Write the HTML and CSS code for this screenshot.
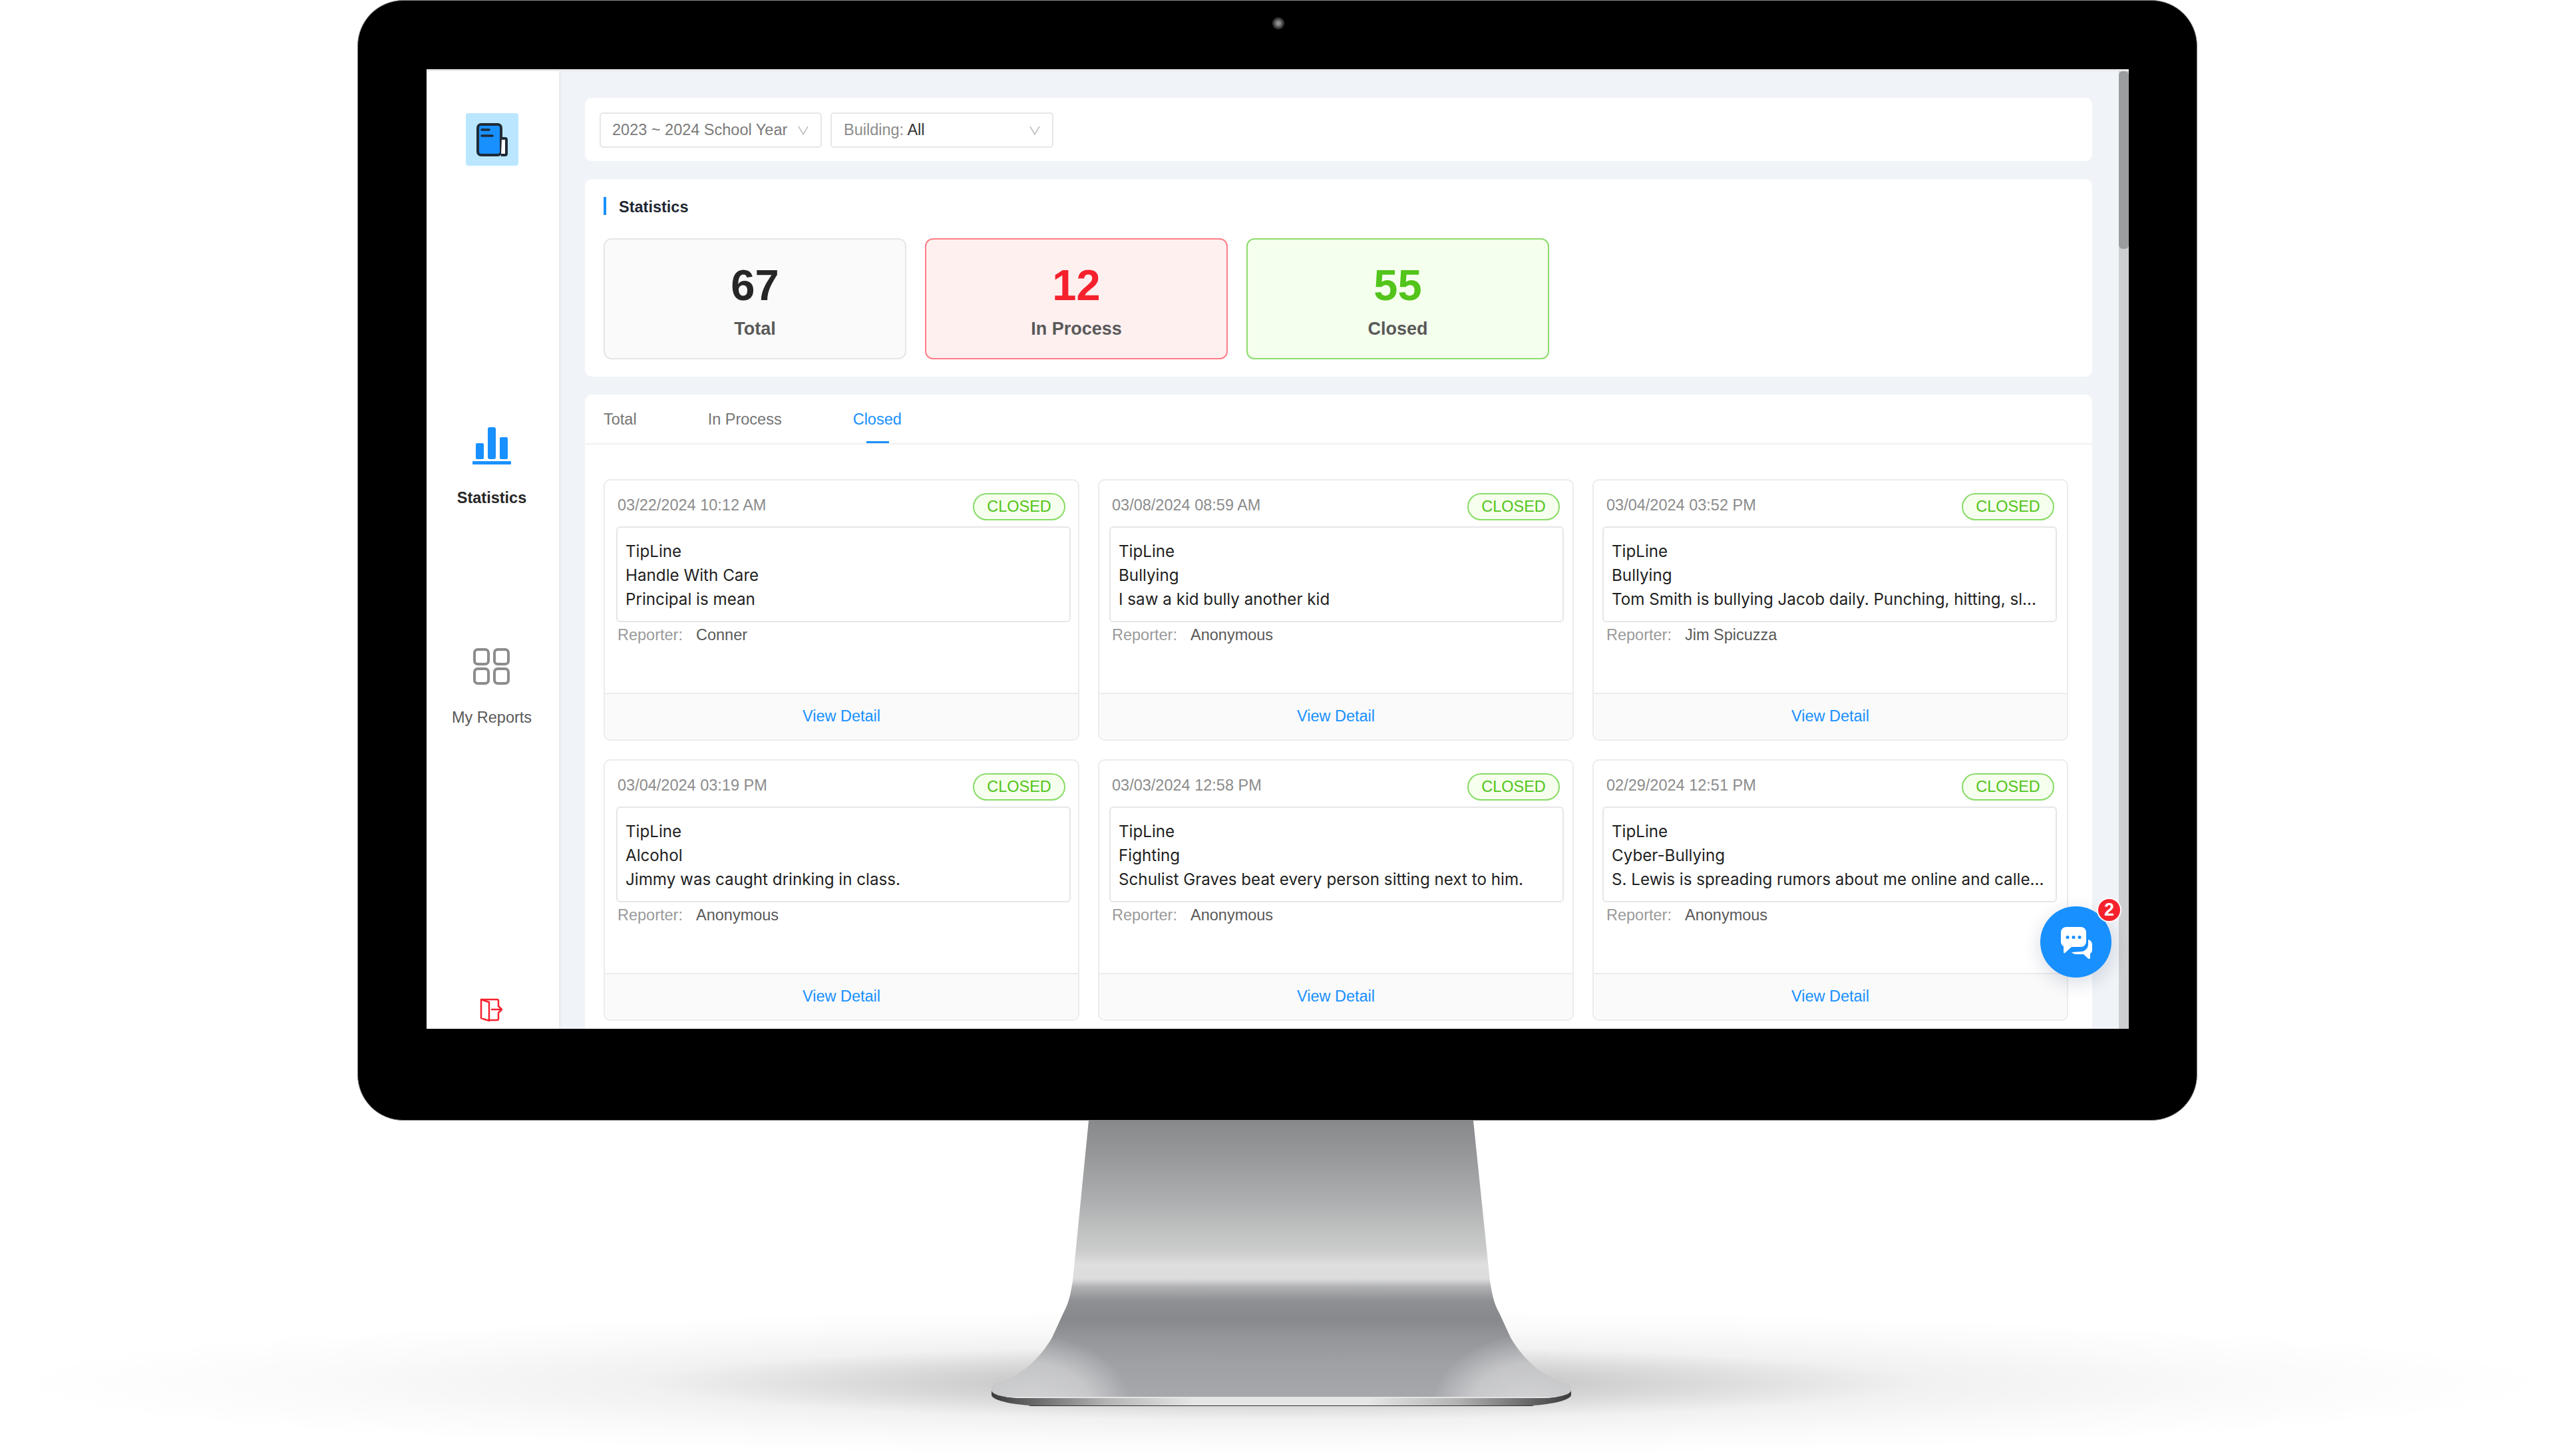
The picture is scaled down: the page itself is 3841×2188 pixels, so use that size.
FILE: index.html
```html
<!DOCTYPE html>
<html>
<head>
    <meta charset="UTF-8">
    <title>TipLine Reports</title>
    <link rel="stylesheet" href="styles.css">
</head>
<body>
    <!-- monitor bezel -->
    <div class="monitor">
        <span class="camera"></span>
        <div class="screen">
            <!-- left nav -->
            <aside class="sidebar">
                <div class="logo">
                    <svg width="79" height="79" viewBox="0 0 79 79">
                        <rect x="18" y="17" width="35" height="46" rx="5" fill="#1890ff" stroke="#1f2b37" stroke-width="4"/>
                        <path d="M54 38h5a2 2 0 0 1 2 2v21a2 2 0 0 1-2 2h-6" fill="#fff" stroke="#1f2b37" stroke-width="4"/>
                        <path d="M24 25h11M24 34h16" stroke="#1f2b37" stroke-width="3.5" stroke-linecap="round"/>
                    </svg>
                </div>
                <div class="nav-item nav-stats">
                    <svg width="58" height="56" viewBox="0 0 58 56" fill="#1890ff">
                        <rect x="5" y="24" width="12" height="24" rx="2"/>
                        <rect x="23" y="0" width="12" height="48" rx="3"/>
                        <rect x="41" y="15" width="12" height="33" rx="2"/>
                        <rect x="0" y="51" width="58" height="5" rx="1"/>
                    </svg>
                    <span class="nav-label active">Statistics</span>
                </div>
                <div class="nav-item nav-reports">
                    <svg width="55" height="55" viewBox="0 0 55 55" fill="none" stroke="#8c8c8c" stroke-width="4">
                        <rect x="2" y="2" width="21" height="22" rx="5"/>
                        <rect x="32" y="2" width="21" height="22" rx="5"/>
                        <rect x="2" y="31" width="21" height="22" rx="5"/>
                        <rect x="32" y="31" width="21" height="22" rx="5"/>
                    </svg>
                    <span class="nav-label">My Reports</span>
                </div>
                <div class="logout">
                    <svg width="34" height="35" viewBox="0 0 34 35" fill="none" stroke="#f5222d" stroke-width="2.5" stroke-linejoin="round" stroke-linecap="round">
                        <path d="M2 2h24a2 2 0 0 1 2 2v7M28 24v7a2 2 0 0 1-2 2H14"/>
                        <path d="M2 2v28l12 4V6z"/>
                        <path d="M18 17h15M28 12l5 5-5 5"/>
                    </svg>
                </div>
            </aside>

            <main class="main">
                <section class="panel filters">
                    <div class="select select-year">
                        <span>2023 ~ 2024 School Year</span>
                        <svg class="chevron" width="16" height="14" viewBox="0 0 16 14"><path d="M1 1l7 12 7-12"/></svg>
                    </div>
                    <div class="select select-building">
                        <span>Building: <b>All</b></span>
                        <svg class="chevron" width="16" height="14" viewBox="0 0 16 14"><path d="M1 1l7 12 7-12"/></svg>
                    </div>
                </section>

                <section class="panel stats">
                    <h2 class="panel-title">Statistics</h2>
                    <div class="stat-row">
                        <div class="stat">
                            <div class="stat-num">67</div>
                            <div class="stat-label">Total</div>
                        </div>
                        <div class="stat stat-red">
                            <div class="stat-num">12</div>
                            <div class="stat-label">In Process</div>
                        </div>
                        <div class="stat stat-green">
                            <div class="stat-num">55</div>
                            <div class="stat-label">Closed</div>
                        </div>
                    </div>
                </section>

                <section class="panel reports">
                    <div class="tabs">
                        <span class="tab">Total</span>
                        <span class="tab">In Process</span>
                        <span class="tab tab-active">Closed</span>
                    </div>
                    <div class="card-grid">
                        <article class="card">
                            <div class="card-head"><span class="date">03/22/2024 10:12 AM</span><span class="badge">CLOSED</span></div>
                            <div class="card-body">TipLine<br>Handle With Care<br>Principal is mean</div>
                            <div class="reporter"><span class="reporter-key">Reporter:</span>Conner</div>
                            <a class="card-foot">View Detail</a>
                        </article>
                        <article class="card">
                            <div class="card-head"><span class="date">03/08/2024 08:59 AM</span><span class="badge">CLOSED</span></div>
                            <div class="card-body">TipLine<br>Bullying<br>I saw a kid bully another kid</div>
                            <div class="reporter"><span class="reporter-key">Reporter:</span>Anonymous</div>
                            <a class="card-foot">View Detail</a>
                        </article>
                        <article class="card">
                            <div class="card-head"><span class="date">03/04/2024 03:52 PM</span><span class="badge">CLOSED</span></div>
                            <div class="card-body">TipLine<br>Bullying<br>Tom Smith is bullying Jacob daily. Punching, hitting, sl...</div>
                            <div class="reporter"><span class="reporter-key">Reporter:</span>Jim Spicuzza</div>
                            <a class="card-foot">View Detail</a>
                        </article>
                        <article class="card">
                            <div class="card-head"><span class="date">03/04/2024 03:19 PM</span><span class="badge">CLOSED</span></div>
                            <div class="card-body">TipLine<br>Alcohol<br>Jimmy was caught drinking in class.</div>
                            <div class="reporter"><span class="reporter-key">Reporter:</span>Anonymous</div>
                            <a class="card-foot">View Detail</a>
                        </article>
                        <article class="card">
                            <div class="card-head"><span class="date">03/03/2024 12:58 PM</span><span class="badge">CLOSED</span></div>
                            <div class="card-body">TipLine<br>Fighting<br>Schulist Graves beat every person sitting next to him.</div>
                            <div class="reporter"><span class="reporter-key">Reporter:</span>Anonymous</div>
                            <a class="card-foot">View Detail</a>
                        </article>
                        <article class="card">
                            <div class="card-head"><span class="date">02/29/2024 12:51 PM</span><span class="badge">CLOSED</span></div>
                            <div class="card-body">TipLine<br>Cyber-Bullying<br>S. Lewis is spreading rumors about me online and calle...</div>
                            <div class="reporter"><span class="reporter-key">Reporter:</span>Anonymous</div>
                            <a class="card-foot">View Detail</a>
                        </article>
                    </div>
                </section>
            </main>

            <div class="scrollbar"><div class="scroll-thumb"></div></div>

            <!-- chat button floats over the page -->
            <div class="chat">
                <svg width="47" height="48" viewBox="0 0 47 48">
                    <path fill="#fff" d="M8 0h22a8 8 0 0 1 8 8v14a8 8 0 0 1-8 8H16L6 39c-1 .6-2 0-2-1v-9a8 8 0 0 1-4-7V8a8 8 0 0 1 8-8z"/>
                    <circle cx="10" cy="15.500" r="2.500" fill="#1890ff"/>
                    <circle cx="19" cy="15.500" r="2.500" fill="#1890ff"/>
                    <circle cx="28" cy="15.500" r="2.500" fill="#1890ff"/>
                    <path fill="#fff" d="M41 19c4 1 6 4 6 8v7c0 3-1 5-3 6v6c0 2-1.500 2.500-3 1.500L34 41H23c-3 0-5-1-7-3l14-1c6 0 11-5 11-11z"/>
                </svg>
                <span class="chat-count">2</span>
            </div>
        </div>
    </div>

    <!-- stand and floor shadow -->
    <svg class="stand" width="3841" height="504" viewBox="0 1684 3841 504">
        <defs>
            <radialGradient id="floorWide">
                <stop offset="0" stop-color="#000" stop-opacity=".34"/>
                <stop offset=".25" stop-color="#000" stop-opacity=".18"/>
                <stop offset=".5" stop-color="#000" stop-opacity=".055"/>
                <stop offset=".75" stop-color="#000" stop-opacity=".02"/>
                <stop offset="1" stop-color="#000" stop-opacity="0"/>
            </radialGradient>
            <linearGradient id="neck" gradientUnits="userSpaceOnUse" x1="0" y1="1684" x2="0" y2="2101">
                <stop offset="0" stop-color="#88898c"/>
                <stop offset=".11" stop-color="#959698"/>
                <stop offset=".28" stop-color="#acadae"/>
                <stop offset=".43" stop-color="#c5c6c6"/>
                <stop offset=".47" stop-color="#cccccc"/>
                <stop offset=".52" stop-color="#dfdfdf"/>
                <stop offset=".57" stop-color="#dcdcdc"/>
                <stop offset=".6" stop-color="#b0b1b3"/>
                <stop offset=".65" stop-color="#8e8f92"/>
                <stop offset=".72" stop-color="#88898d"/>
                <stop offset=".78" stop-color="#95969a"/>
                <stop offset=".88" stop-color="#a0a1a5"/>
                <stop offset="1" stop-color="#a7a8ac"/>
            </linearGradient>
            <linearGradient id="plate" gradientUnits="userSpaceOnUse" x1="1490" y1="0" x2="2361" y2="0">
                <stop offset="0" stop-color="#3c3c3c"/>
                <stop offset=".2" stop-color="#b5b5b5"/>
                <stop offset=".35" stop-color="#e6e6e6"/>
                <stop offset=".65" stop-color="#e6e6e6"/>
                <stop offset=".8" stop-color="#b5b5b5"/>
                <stop offset="1" stop-color="#3c3c3c"/>
            </linearGradient>
            <radialGradient id="glint">
                <stop offset="0" stop-color="#fff" stop-opacity=".5"/>
                <stop offset=".6" stop-color="#fff" stop-opacity=".38"/>
                <stop offset="1" stop-color="#fff" stop-opacity="0"/>
            </radialGradient>
            <clipPath id="standClip">
                <path d="M1636 1684H2214L2239 1925C2243 1950 2246 1960 2253 1973L2270 2010C2290 2045 2325 2075 2358 2080Q2361 2086 2361 2089C2361 2095 2345 2101 2310 2101H1541C1506 2101 1490 2095 1490 2089Q1490 2086 1493 2080C1526 2075 1561 2045 1581 2010L1598 1973C1605 1960 1608 1950 1612 1925Z"/>
            </clipPath>
        </defs>
        <ellipse cx="1925" cy="2078" rx="1925" ry="112" fill="url(#floorWide)"/>
        <path d="M1490 2089v7c0 6 18 13 56 16 2 1 4 1 6 1H2299c2 0 4 0 6-1 38-3 56-10 56-16v-7z" fill="url(#plate)"/>
        <path d="M1546 2112c2 1 4 1 6 1H2299c2 0 4 0 6-1z" fill="#333"/>
        <g clip-path="url(#standClip)">
            <rect x="1480" y="1684" width="900" height="420" fill="url(#neck)"/>
            <ellipse cx="1550" cy="2115" rx="150" ry="110" fill="url(#glint)"/>
            <ellipse cx="2301" cy="2115" rx="150" ry="110" fill="url(#glint)"/>
            <rect x="1480" y="2099" width="900" height="2" fill="#e4e4e4"/>
        </g>
    </svg>
</body>
</html>
```

FILE: styles.css
```css
* {
    box-sizing: border-box;
}

body {
    margin: 0;
    width: 3841px;
    height: 2188px;
    overflow: hidden;
    background-color: #ffffff;
    font-family: "Liberation Sans", Arial, sans-serif;
    font-size: 23.5px;
    color: #595959;
}

/* monitor */
.monitor {
    position: relative;
    width: 2765px;
    height: 1684px;
    margin-left: 537px;
    padding: 103px 102px 137px 103px;
    background-color: #000000;
    border: 1px solid #8a8a8a;
    border-radius: 69px;
}

.camera {
    position: absolute;
    left: 1374px;
    top: 25px;
    width: 18px;
    height: 18px;
    border-radius: 50%;
    background: radial-gradient(circle, #949494 0, #8a8a8a 22%, #3a3a3a 55%, #262626 100%);
}

.stand {
    display: block;
}

.screen {
    position: relative;
    display: flex;
    height: 1442px;
    overflow: hidden;
    background-color: #f0f3f7;
    border-top: 3px solid #e9eaec;
}

/* sidebar */
.sidebar {
    display: flex;
    flex-direction: column;
    align-items: center;
    flex: none;
    width: 199px;
    padding: 63px 3px 11px 0;
    background-color: #ffffff;
    box-shadow: 2px 0 6px rgba(0, 21, 41, 0.05);
}

.logo {
    width: 79px;
    height: 79px;
    background-color: #bae7ff;
    border-radius: 4px;
}

.logo svg,
.nav-item svg,
.logout svg {
    display: block;
}

.nav-item {
    display: flex;
    flex-direction: column;
    align-items: center;
}

.nav-stats {
    gap: 36px;
    margin-top: 393px;
}

.nav-reports {
    gap: 35px;
    margin-top: 211px;
}

.nav-label {
    line-height: 29px;
    white-space: nowrap;
}

.nav-label.active {
    font-weight: bold;
    color: #262626;
}

.logout {
    margin-top: auto;
    margin-right: 3px;
}

/* main column */
.main {
    flex: 1;
    min-width: 0;
    padding: 40px 40px 0 39px;
    overflow: hidden;
}

.panel {
    background-color: #ffffff;
    border-radius: 10px;
}

.filters {
    display: flex;
    gap: 13px;
    height: 95px;
    padding: 22px;
}

.select {
    display: flex;
    align-items: center;
    justify-content: space-between;
    height: 53px;
    padding: 0 18px;
    color: #8c8c8c;
    background-color: #ffffff;
    border: 2px solid #e6e6e6;
    border-radius: 5px;
}

.select-year {
    width: 334px;
    padding-left: 17px;
    color: #7a7a7a;
}

.select-building {
    width: 335px;
}

.select b {
    font-weight: normal;
    color: #333333;
}

.chevron {
    fill: none;
    stroke: #bdbdbd;
    stroke-width: 1.5;
}

.stats {
    height: 297px;
    margin-top: 27px;
    padding: 27px 28px;
}

.panel-title {
    height: 27px;
    margin: 0;
    padding-left: 19px;
    border-left: 4px solid #1890ff;
    font-size: 23.5px;
    line-height: 30px;
    font-weight: bold;
    color: #1f2733;
}

.stat-row {
    display: flex;
    gap: 28px;
    margin-top: 35px;
}

.stat {
    width: 455px;
    height: 182px;
    padding-top: 31px;
    text-align: center;
    background-color: #fafafa;
    border: 2px solid #e6e6e6;
    border-radius: 12px;
}

.stat-num {
    font-size: 65px;
    font-weight: bold;
    line-height: 76px;
    color: #262626;
}

.stat-label {
    margin-top: 11px;
    font-size: 27px;
    font-weight: bold;
    line-height: 32px;
    color: #595959;
}

.stat-red {
    background-color: #fff0f0;
    border-color: #ff7d86;
}

.stat-red .stat-num {
    color: #f5222d;
}

.stat-green {
    background-color: #f4ffed;
    border-color: #8ddc6e;
}

.stat-green .stat-num {
    color: #52c41a;
}

/* tabs and report cards */
.reports {
    margin-top: 27px;
    padding-bottom: 40px;
}

.tabs {
    display: flex;
    gap: 107px;
    height: 75px;
    padding-left: 28px;
    line-height: 74px;
    color: #757575;
    border-bottom: 2px solid #f0f0f0;
}

.tab {
    position: relative;
    height: 73px;
}

.tab-active {
    color: #1890ff;
}

.tab-active::after {
    content: "";
    position: absolute;
    left: 20px;
    right: 19px;
    bottom: 0;
    height: 3px;
    background-color: #1890ff;
}

.card-grid {
    display: grid;
    grid-template-columns: repeat(3, 715px);
    gap: 28px;
    padding: 52px 0 0 28px;
}

.card {
    display: flex;
    flex-direction: column;
    height: 393px;
    overflow: hidden;
    background-color: #ffffff;
    border: 2px solid #ececec;
    border-radius: 10px;
}

.card-head {
    display: flex;
    align-items: flex-start;
    justify-content: space-between;
    padding: 19px 19px 0 19px;
    height: 69px;
}

.date {
    line-height: 36px;
    color: #8c8c8c;
}

.badge {
    width: 139px;
    height: 41px;
    line-height: 37px;
    text-align: center;
    color: #52c41a;
    background-color: #f6ffed;
    border: 2px solid #87dc66;
    border-radius: 21px;
}

.card-body {
    width: 683px;
    height: 144px;
    margin-left: 15px;
    padding: 18px 12px 0;
    font-family: Inter, "Liberation Sans", sans-serif;
    font-size: 24.2px;
    line-height: 36px;
    white-space: nowrap;
    color: #1f1f1f;
    border: 2px solid #e6e6ea;
    border-radius: 6px;
}

/* the text boxes sit a little closer together than the cards do */
.card:nth-child(3n+1) .card-body {
    margin-left: 17px;
}

.card:nth-child(3n) .card-body {
    margin-left: 13px;
}

.reporter {
    padding-left: 19px;
    line-height: 39px;
    white-space: nowrap;
}

.reporter-key {
    display: inline-block;
    width: 118px;
    color: #9a9a9a;
}

.card-foot {
    display: block;
    height: 70px;
    margin-top: auto;
    line-height: 66px;
    text-align: center;
    color: #1890ff;
    background-color: #fafafa;
    border-top: 2px solid #ececec;
}

/* scrollbar */
.scrollbar {
    flex: none;
    width: 15px;
    background-color: #cdced0;
}

.scroll-thumb {
    height: 267px;
    background-color: #9b9c9e;
    border-radius: 6px;
}

/* chat button */
.chat {
    position: absolute;
    right: 26px;
    bottom: 77px;
    display: flex;
    align-items: center;
    justify-content: center;
    width: 107px;
    height: 107px;
    padding: 2px 0 0 2px;
    background-color: #1890ff;
    border-radius: 50%;
    box-shadow: 0 8px 28px rgba(0, 40, 90, 0.16);
}

.chat-count {
    position: absolute;
    left: 85px;
    top: -13px;
    width: 37px;
    height: 37px;
    font-size: 27px;
    font-weight: bold;
    line-height: 33px;
    text-align: center;
    color: #ffffff;
    background-color: #f5222d;
    border: 2px solid #ffffff;
    border-radius: 50%;
}
```
